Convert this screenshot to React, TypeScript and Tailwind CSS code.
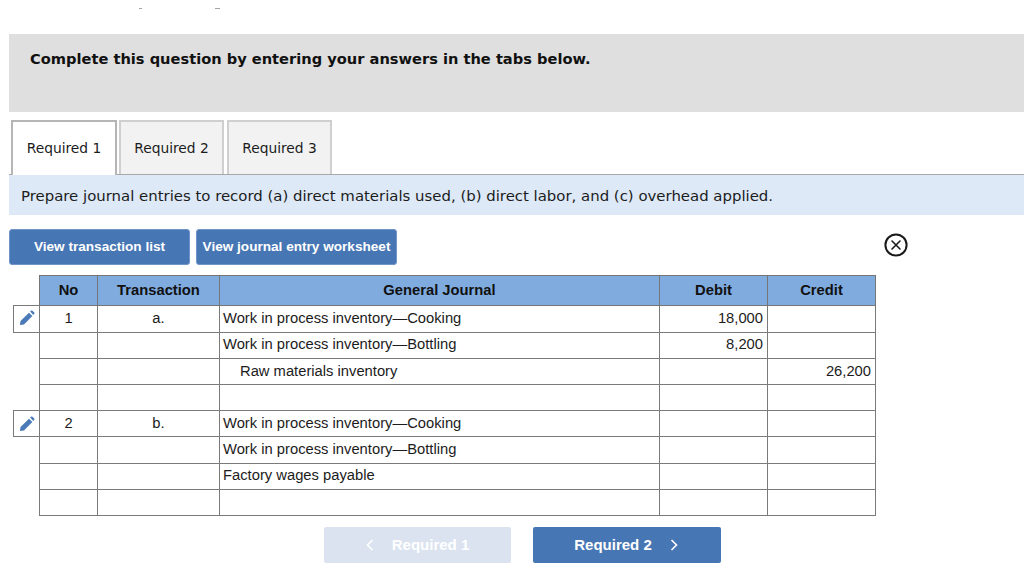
const rows: { no?: string; tx?: string; acct?: string; indent?: boolean; debit?: string; credit?: string; edit?: boolean }[] = [
  { no: "1", tx: "a.", acct: "Work in process inventory—Cooking", debit: "18,000", edit: true },
  { acct: "Work in process inventory—Bottling", debit: "8,200" },
  { acct: "Raw materials inventory", indent: true, credit: "26,200" },
  {},
  { no: "2", tx: "b.", acct: "Work in process inventory—Cooking", edit: true },
  { acct: "Work in process inventory—Bottling" },
  { acct: "Factory wages payable" },
  {},
];

const heights = ["h-[27px] [&>td]:pb-[2px]", "h-[26px] [&>td]:pb-[2px]", "h-[26px]", "h-[26px]", "h-[26px]", "h-[27px] [&>td]:pb-[2px]", "h-[26px] [&>td]:pb-[2px]", "h-[26px]"];

function Pencil() {
  return (
    <svg width="16" height="16" viewBox="0 0 17 17" className="block">
      <path d="M1 16 L1.6 11.6 L10.6 2.8 L14.2 6.4 L5.3 15.3 Z" fill="#4a7ab8" />
      <path d="M11.8 1.7 L13.1 0.6 Q13.7 0.2 14.3 0.7 L16.3 2.7 Q16.7 3.3 16.2 3.9 L15.2 5.2 Z" fill="#4a7ab8" />
    </svg>
  );
}

function Tab({ label, active }: { label: string; active?: boolean }) {
  return active ? (
    <div className="w-[106px] h-[55px] -mb-px border-2 border-b-0 border-[#b5b5b5] bg-white flex items-center justify-center text-[13.8px] text-[#1c1c1c]">
      {label}
    </div>
  ) : (
    <div className="w-[105px] h-[54px] border-2 border-b-0 border-[#cfcfcf] bg-[#f2f2f2] flex items-center justify-center text-[13.8px] text-[#1c1c1c]">
      {label}
    </div>
  );
}

export default function App() {
  return (
    <div className="w-[1024px] h-[582px] overflow-hidden bg-white font-['DejaVu_Sans',sans-serif]">
      <div className="h-[34px] flex items-start pt-[8px] pl-[139px]">
        <span className="w-[3px] h-px bg-[#a5a5a5]" />
        <span className="w-[5px] h-px bg-[#a5a5a5] ml-[73px]" />
      </div>

      <div className="ml-[9px] h-[78px] bg-[#dfdfdf] pl-[21px] pt-[15px] text-[14.63px] leading-5 font-bold text-[#111111]">
        Complete this question by entering your answers in the tabs below.
      </div>

      <div className="ml-[11px] mt-[8px] flex items-start relative">
        <Tab label="Required 1" active />
        <div className="ml-[2px]"><Tab label="Required 2" /></div>
        <div className="ml-[3px]"><Tab label="Required 3" /></div>
      </div>
      <div className="ml-[9px] h-px bg-[#a8a8a8]" />

      <div className="ml-[9px] h-[40px] bg-[#dde9f7] pl-[12px] pt-[2px] flex items-center text-[14.92px] text-[#1c1c1c] whitespace-nowrap">
        Prepare journal entries to record (a) direct materials used, (b) direct labor, and (c) overhead applied.
      </div>

      <div className="ml-[9px] mt-[14px] w-[899px] flex items-center justify-between">
        <div className="flex gap-[6px] font-['Liberation_Sans',sans-serif]">
          <button className="w-[181px] h-[36px] rounded-[3px] bg-[#4776b4] border border-[#6f95c8] text-white text-[13.6px] font-bold whitespace-nowrap">
            View transaction list
          </button>
          <button className="w-[201px] h-[36px] rounded-[3px] bg-[#4776b4] border border-[#6f95c8] text-white text-[13.6px] font-bold whitespace-nowrap">
            View journal entry worksheet
          </button>
        </div>
        <svg width="24" height="24" viewBox="0 0 24 24" className="-mt-[4px]">
          <circle cx="12" cy="12" r="10.6" fill="none" stroke="#1a1a1a" strokeWidth="2" />
          <path d="M8 8 L16 16 M16 8 L8 16" stroke="#1a1a1a" strokeWidth="1.6" strokeLinecap="round" />
        </svg>
      </div>

      <table className="ml-[13px] mt-[10px] border-collapse table-fixed w-[863px] font-['Liberation_Sans',sans-serif] text-[14.75px] text-[#1c1c1c]">
        <colgroup>
          <col className="w-[26px]" />
          <col className="w-[58px]" />
          <col className="w-[122px]" />
          <col className="w-[440px]" />
          <col className="w-[108px]" />
          <col className="w-[108px]" />
        </colgroup>
        <thead>
          <tr className="h-[30px] font-bold text-[#111111]">
            <th className="p-0" />
            {["No", "Transaction", "General Journal", "Debit", "Credit"].map((h) => (
              <th key={h} className="p-0 border border-[#757575] bg-[#7fabdf] text-center font-bold">
                {h}
              </th>
            ))}
          </tr>
        </thead>
        <tbody>
          {rows.map((r, i) => (
            <tr key={i} className={heights[i]}>
              <td className={r.edit ? "p-0 border border-[#7a7a7a] bg-white" : "p-0"}>
                {r.edit && (
                  <div className="flex justify-center">
                    <Pencil />
                  </div>
                )}
              </td>
              <td className="p-0 border border-[#7a7a7a] text-center">{r.no}</td>
              <td className="p-0 border border-[#7a7a7a] text-center">{r.tx}</td>
              <td className={`p-0 border border-[#7a7a7a] whitespace-nowrap ${r.indent ? "pl-[20px]" : "pl-[3px]"}`}>{r.acct}</td>
              <td className="p-0 pr-[4px] border border-[#7a7a7a] text-right">{r.debit}</td>
              <td className="p-0 pr-[4px] border border-[#7a7a7a] text-right">{r.credit}</td>
            </tr>
          ))}
        </tbody>
      </table>

      <div className="ml-[324px] mt-[11px] flex gap-[22px] font-['Liberation_Sans',sans-serif] text-[15px] font-bold text-white">
        <div className="w-[187px] h-[36px] rounded-[2px] bg-[#dae3ef] flex items-center justify-center gap-[18px]">
          <svg width="8" height="12" viewBox="0 0 8 12"><path d="M6.5 1 L1.5 6 L6.5 11" fill="none" stroke="white" strokeWidth="1.6" /></svg>
          <span>Required 1</span>
        </div>
        <div className="w-[188px] h-[36px] rounded-[2px] bg-[#4776b4] flex items-center justify-center gap-[18px] pr-[2px]">
          <span>Required 2</span>
          <svg width="8" height="12" viewBox="0 0 8 12"><path d="M1.5 1 L6.5 6 L1.5 11" fill="none" stroke="white" strokeWidth="1.6" /></svg>
        </div>
      </div>
    </div>
  );
}
